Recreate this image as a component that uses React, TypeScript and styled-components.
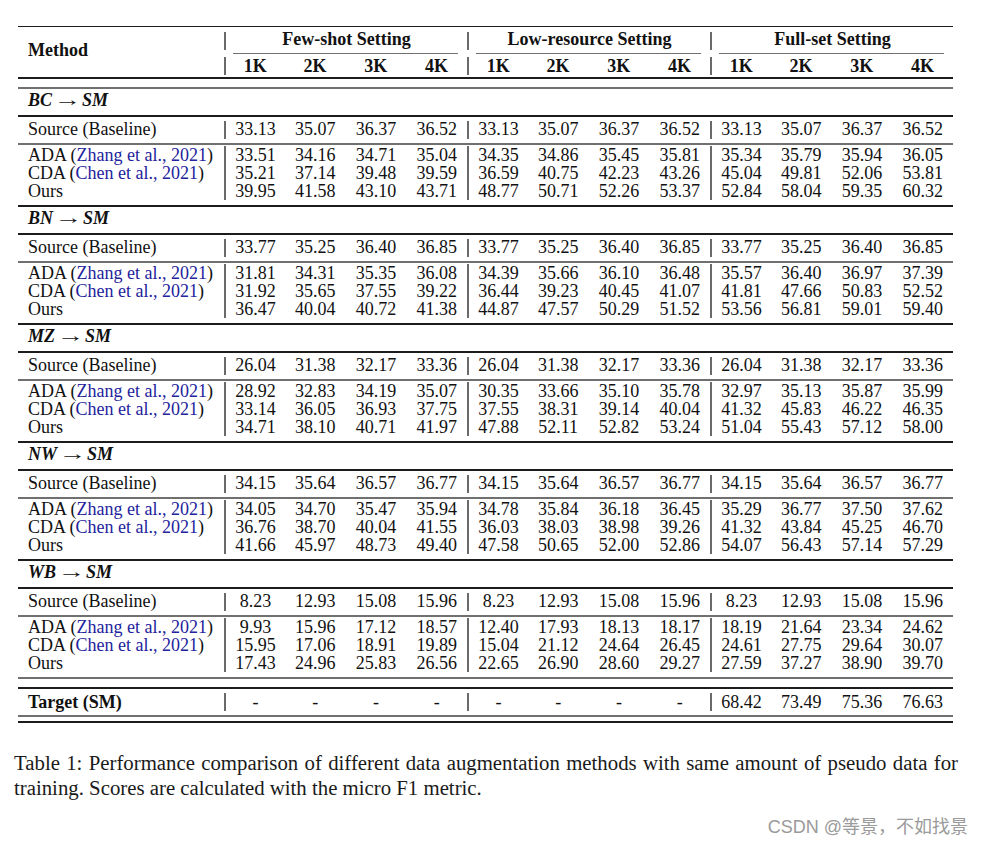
import * as React from "react";
import styled, { createGlobalStyle } from "styled-components";

const GlobalStyle = createGlobalStyle`
  html, body {
    margin: 0;
    padding: 0;
    background: #ffffff;
  }
`;

const COLS = "206px repeat(12, 1fr)";
const DARK = "#1c1c1c";
const GRAY = "#707070";
const BAR = "2px solid #6a6a6a";

type Block = {
  src: string;
  base: string[];
  ada: string[];
  cda: string[];
  ours: string[];
};

const split = (s: string) => s.trim().split(/\s+/);
const triple = (s: string) => [...split(s), ...split(s), ...split(s)];

const blocks: Block[] = [
  {
    src: "BC",
    base: triple("33.13 35.07 36.37 36.52"),
    ada: split("33.51 34.16 34.71 35.04 34.35 34.86 35.45 35.81 35.34 35.79 35.94 36.05"),
    cda: split("35.21 37.14 39.48 39.59 36.59 40.75 42.23 43.26 45.04 49.81 52.06 53.81"),
    ours: split("39.95 41.58 43.10 43.71 48.77 50.71 52.26 53.37 52.84 58.04 59.35 60.32"),
  },
  {
    src: "BN",
    base: triple("33.77 35.25 36.40 36.85"),
    ada: split("31.81 34.31 35.35 36.08 34.39 35.66 36.10 36.48 35.57 36.40 36.97 37.39"),
    cda: split("31.92 35.65 37.55 39.22 36.44 39.23 40.45 41.07 41.81 47.66 50.83 52.52"),
    ours: split("36.47 40.04 40.72 41.38 44.87 47.57 50.29 51.52 53.56 56.81 59.01 59.40"),
  },
  {
    src: "MZ",
    base: triple("26.04 31.38 32.17 33.36"),
    ada: split("28.92 32.83 34.19 35.07 30.35 33.66 35.10 35.78 32.97 35.13 35.87 35.99"),
    cda: split("33.14 36.05 36.93 37.75 37.55 38.31 39.14 40.04 41.32 45.83 46.22 46.35"),
    ours: split("34.71 38.10 40.71 41.97 47.88 52.11 52.82 53.24 51.04 55.43 57.12 58.00"),
  },
  {
    src: "NW",
    base: triple("34.15 35.64 36.57 36.77"),
    ada: split("34.05 34.70 35.47 35.94 34.78 35.84 36.18 36.45 35.29 36.77 37.50 37.62"),
    cda: split("36.76 38.70 40.04 41.55 36.03 38.03 38.98 39.26 41.32 43.84 45.25 46.70"),
    ours: split("41.66 45.97 48.73 49.40 47.58 50.65 52.00 52.86 54.07 56.43 57.14 57.29"),
  },
  {
    src: "WB",
    base: triple("8.23 12.93 15.08 15.96"),
    ada: split("9.93 15.96 17.12 18.57 12.40 17.93 18.13 18.17 18.19 21.64 23.34 24.62"),
    cda: split("15.95 17.06 18.91 19.89 15.04 21.12 24.64 26.45 24.61 27.75 29.64 30.07"),
    ours: split("17.43 24.96 25.83 26.56 22.65 26.90 28.60 29.27 27.59 37.27 38.90 39.70"),
  },
];

const target = split("- - - - - - - - 68.42 73.49 75.36 76.63");
const groups = ["Few-shot Setting", "Low-resource Setting", "Full-set Setting"];
const sizes = ["1K", "2K", "3K", "4K"];

const Page = styled.div`
  padding-top: 26px;
  font-family: "Liberation Serif", "Times New Roman", serif;
  color: #111;
`;

const Table = styled.div`
  width: 935px;
  margin-left: 18px;
  font-size: 18px;
`;

const Rule = styled.div<{ $w?: number; $c?: string; $gap?: number }>`
  height: ${(p) => p.$w ?? 2}px;
  background: ${(p) => p.$c ?? DARK};
  margin-top: ${(p) => p.$gap ?? 0}px;
`;

const HeadGrid = styled.div`
  display: grid;
  grid-template-columns: ${COLS};
  grid-template-rows: 27px 23px;
  font-weight: bold;
  line-height: 18px;
`;

const MethodHead = styled.div`
  grid-row: 1 / span 2;
  align-self: center;
  padding: 0 10px 4px;
`;

const GroupHead = styled.div`
  grid-column: span 4;
  display: flex;
  flex-direction: column;
`;

const GroupLabel = styled.div`
  flex: 1;
  margin: 5px 0 3px;
  padding-bottom: 4px;
  line-height: 14px;
  border-left: ${BAR};
  text-align: center;
`;

const CMid = styled.div`
  height: 1px;
  margin: 0 9px 0 9px;
  background: ${GRAY};
`;

const SubHead = styled.div<{ $sep?: boolean }>`
  text-align: center;
  margin: 3px 0 2px;
  border-left: ${(p) => (p.$sep ? BAR : "none")};
`;

const Row = styled.div`
  display: grid;
  grid-template-columns: ${COLS};
  line-height: 18px;
`;

/* $lift moves the text up inside a spaced row while keeping the bar centred */
const Label = styled.div<{ $spaced?: boolean; $lift?: number; $bold?: boolean }>`
  padding-left: 10px;
  margin: ${(p) => (p.$spaced ? "4px 0" : "0")};
  line-height: ${(p) => 18 - (p.$lift ?? 0) * 2}px;
  padding-bottom: ${(p) => (p.$lift ?? 0) * 2}px;
  font-weight: ${(p) => (p.$bold ? "bold" : "normal")};
  white-space: nowrap;
`;

const Num = styled.div<{ $sep?: boolean; $spaced?: boolean; $lift?: number }>`
  text-align: center;
  margin: ${(p) => (p.$spaced ? "4px 0" : "0")};
  line-height: ${(p) => 18 - (p.$lift ?? 0) * 2}px;
  padding-bottom: ${(p) => (p.$lift ?? 0) * 2}px;
  border-left: ${(p) => (p.$sep ? BAR : "none")};
`;

const SectionTitle = styled.div`
  padding: 2px 10px 6px;
  line-height: 18px;
  font-weight: bold;
  font-style: italic;
`;

const Arrow = styled.span`
  display: inline-block;
  margin: 0 5px 0 6px;
  font-weight: normal;
  font-style: normal;
  font-size: 19px;
  transform: scaleX(1.45);
`;

const DataGroup = styled.div`
  padding: 1px 0 5px;
`;

const Cite = styled.span`
  color: #23239c;
`;

const Caption = styled.div`
  width: 944px;
  margin: 27px 0 0 14px;
  font-size: 20.8px;
  line-height: 25px;
  color: #1a1a1a;
`;

const CaptionLine = styled.div<{ $full?: boolean }>`
  text-align: ${(p) => (p.$full ? "justify" : "left")};
  text-align-last: ${(p) => (p.$full ? "justify" : "left")};
  white-space: nowrap;
`;

const Watermark = styled.div`
  display: flex;
  justify-content: flex-end;
  padding: 12px 16px 0 0;
  font-family: "Liberation Sans", "Noto Sans CJK SC", sans-serif;
  font-size: 18px;
  color: #9a9a9a;
`;

type LineProps = {
  label: React.ReactNode;
  values: string[];
  spaced?: boolean;
  lift?: number;
  bold?: boolean;
};

const Line: React.FC<LineProps> = ({ label, values, spaced, lift, bold }) => (
  <Row>
    <Label $spaced={spaced} $lift={lift} $bold={bold}>
      {label}
    </Label>
    {values.map((v, i) => (
      <Num key={i} $sep={i % 4 === 0} $spaced={spaced} $lift={lift}>
        {v}
      </Num>
    ))}
  </Row>
);

const BlockView: React.FC<{ b: Block; last: boolean }> = ({ b, last }) => (
  <>
    <SectionTitle>
      {b.src}
      <Arrow>→</Arrow>SM
    </SectionTitle>
    <Rule />
    <Line label="Source (Baseline)" values={b.base} spaced lift={1} />
    <Rule $c={GRAY} />
    <DataGroup>
      <Line
        label={
          <>
            ADA (<Cite>Zhang et al., 2021</Cite>)
          </>
        }
        values={b.ada}
      />
      <Line
        label={
          <>
            CDA (<Cite>Chen et al., 2021</Cite>)
          </>
        }
        values={b.cda}
      />
      <Line label="Ours" values={b.ours} />
    </DataGroup>
    <Rule $c={last ? GRAY : DARK} />
  </>
);

const App: React.FC = () => (
  <Page>
    <GlobalStyle />
    <Table>
      <Rule $w={1} />
      <HeadGrid>
        <MethodHead>Method</MethodHead>
        {groups.map((g) => (
          <GroupHead key={g}>
            <GroupLabel>{g}</GroupLabel>
            <CMid />
          </GroupHead>
        ))}
        {groups.map((g) =>
          sizes.map((s, i) => (
            <SubHead key={g + s} $sep={i === 0}>
              {s}
            </SubHead>
          ))
        )}
      </HeadGrid>
      <Rule />
      <Rule $c={GRAY} $gap={8} />
      {blocks.map((b, i) => (
        <BlockView key={b.src} b={b} last={i === blocks.length - 1} />
      ))}
      <Rule $gap={8} />
      <Line label="Target (SM)" values={target} spaced bold />
      <Rule $c={GRAY} />
      <Rule $gap={4} />
    </Table>
    <Caption>
      <CaptionLine $full>
        Table 1: Performance comparison of different data augmentation methods with same amount of pseudo data for
      </CaptionLine>
      <CaptionLine>training. Scores are calculated with the micro F1 metric.</CaptionLine>
    </Caption>
    <Watermark>CSDN @等景，不如找景</Watermark>
  </Page>
);

export default App;
